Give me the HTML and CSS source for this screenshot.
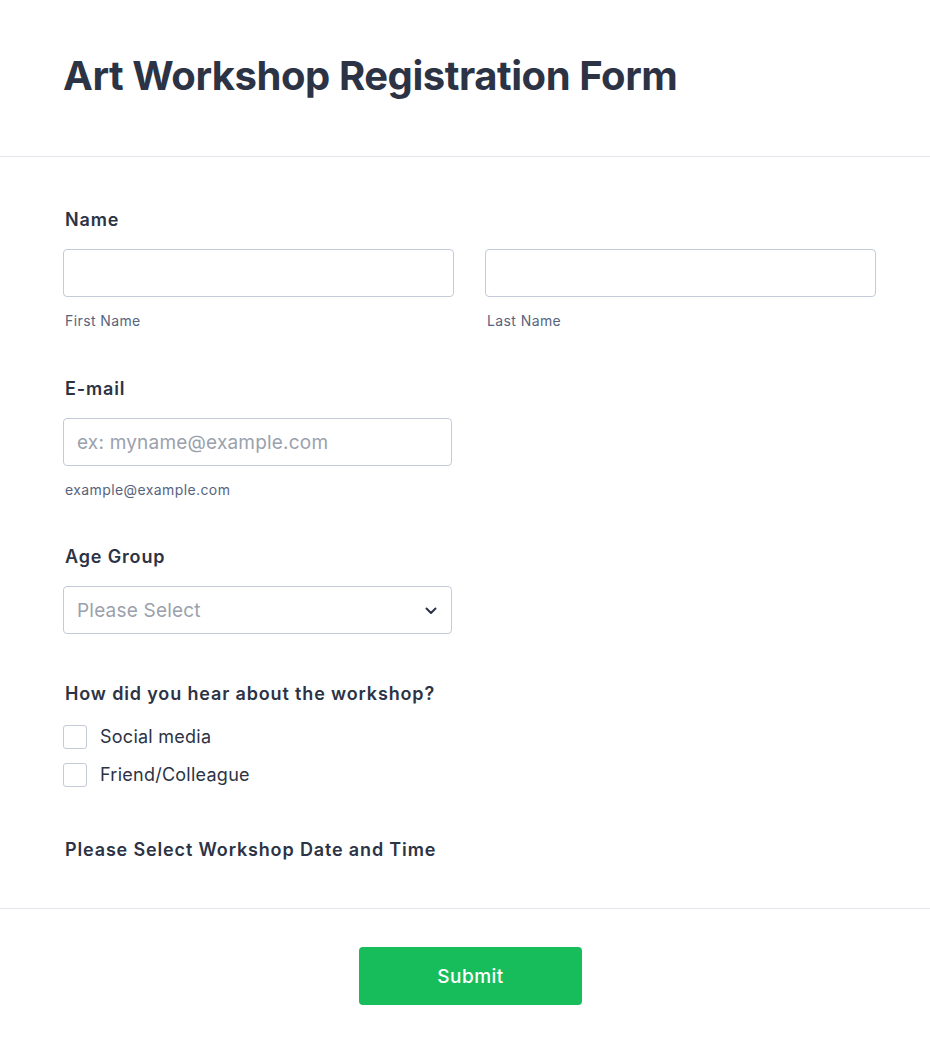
FILE: index.html
```html
<!DOCTYPE html>
<html lang="en">
<head>
<meta charset="utf-8">
<title>Art Workshop Registration Form</title>
<link rel="stylesheet" href="styles.css">
</head>
<body>
<div class="page">
  <header class="form-header">
    <h1 class="form-title">Art Workshop Registration Form</h1>
  </header>
  <form class="form-body">
    <div class="field field-name">
      <div class="label">Name</div>
      <div class="row">
        <div class="col">
          <input class="input" type="text">
          <div class="sublabel">First Name</div>
        </div>
        <div class="col">
          <input class="input" type="text">
          <div class="sublabel">Last Name</div>
        </div>
      </div>
    </div>
    <div class="field field-email">
      <div class="label">E-mail</div>
      <input class="input input-half" type="email" placeholder="ex: myname@example.com">
      <div class="sublabel">example@example.com</div>
    </div>
    <div class="field field-age">
      <div class="label">Age Group</div>
      <div class="select input-half">
        <span class="select-text">Please Select</span>
        <svg class="chevron" width="12" height="8" viewBox="0 0 12 8"><path d="M1.5 1.5 L6 6 L10.5 1.5" fill="none" stroke="#2c3345" stroke-width="2" stroke-linecap="round" stroke-linejoin="round"/></svg>
      </div>
    </div>
    <div class="field field-hear">
      <div class="label">How did you hear about the workshop?</div>
      <div class="checks">
        <label class="check"><span class="box"></span><span class="check-text">Social media</span></label>
        <label class="check"><span class="box"></span><span class="check-text">Friend/Colleague</span></label>
      </div>
    </div>
    <div class="field field-date">
      <div class="label">Please Select Workshop Date and Time</div>
    </div>
  </form>
  <footer class="form-footer">
    <button class="submit" type="button">Submit</button>
  </footer>
</div>
</body>
</html>
```
FILE: styles.css
```css
* { box-sizing: border-box; }
html, body { margin: 0; padding: 0; background: #fff; }
body {
  font-family: Inter, "Noto Sans", "Liberation Sans", sans-serif;
  color: #2c3345;
}
.page { width: 930px; }
.form-header {
  height: 157px;
  border-bottom: 1px solid #e3e5ea;
  padding: 52px 0 0 63px;
}
.form-title {
  margin: 0;
  font-size: 40px;
  line-height: 48px;
  font-weight: 700;
  color: #2c3345;
  letter-spacing: -0.45px;
}
.form-body {
  padding: 51px 54px 0 63px;
}
.label {
  font-size: 18px;
  line-height: 24px;
  font-weight: 600;
  letter-spacing: 0.85px;
  padding-left: 2px;
  color: #2c3345;
}
.field-name { margin-bottom: 47px; }
.field-email { margin-bottom: 46px; }
.field-age { margin-bottom: 48px; }
.field-hear { margin-bottom: 51px; }
.row { display: flex; gap: 31px; margin-top: 17px; }
.col { flex: 1; }
.input {
  display: block;
  width: 100%;
  height: 48px;
  border: 1px solid #c3cad8;
  border-radius: 4px;
  background: #fff;
  font-family: inherit;
  font-size: 19px;
  letter-spacing: 0.2px;
  padding: 0 13px;
  color: #2c3345;
  outline: none;
}
.field-email .input, .field-age .select { margin-top: 17px; }
.input::placeholder { color: #9aa1ad; }
.input-half { width: 389px; }
.sublabel {
  margin-top: 15px;
  padding-left: 2px;
  font-size: 14px;
  line-height: 18px;
  letter-spacing: 0.4px;
  color: #57647e;
}
.select {
  height: 48px;
  border: 1px solid #c3cad8;
  border-radius: 4px;
  display: flex;
  align-items: center;
  justify-content: space-between;
  padding: 0 13px;
}
.select-text { font-size: 19px; letter-spacing: 0.2px; color: #9aa1ad; }
.chevron { margin-right: 1px; margin-top: 1px; }
.checks { margin-top: 19px; display: flex; flex-direction: column; gap: 14px; }
.check { display: flex; align-items: center; gap: 13px; }
.box {
  width: 24px; height: 24px;
  border: 1px solid #c3cad8;
  border-radius: 3px;
  background: #fff;
}
.check-text { font-size: 18px; line-height: 24px; letter-spacing: 0.25px; color: #2c3345; }
.form-footer {
  margin-top: 46px;
  border-top: 1px solid #e3e5ea;
  padding-top: 38px;
  padding-bottom: 50px;
  display: flex;
  justify-content: center;
}
.submit {
  width: 223px;
  height: 58px;
  margin-left: 11px;
  border: none;
  border-radius: 4px;
  background: #18bd5b;
  color: #fff;
  font-family: inherit;
  font-size: 19px;
  font-weight: 500;
  letter-spacing: 0.5px;
}
```
